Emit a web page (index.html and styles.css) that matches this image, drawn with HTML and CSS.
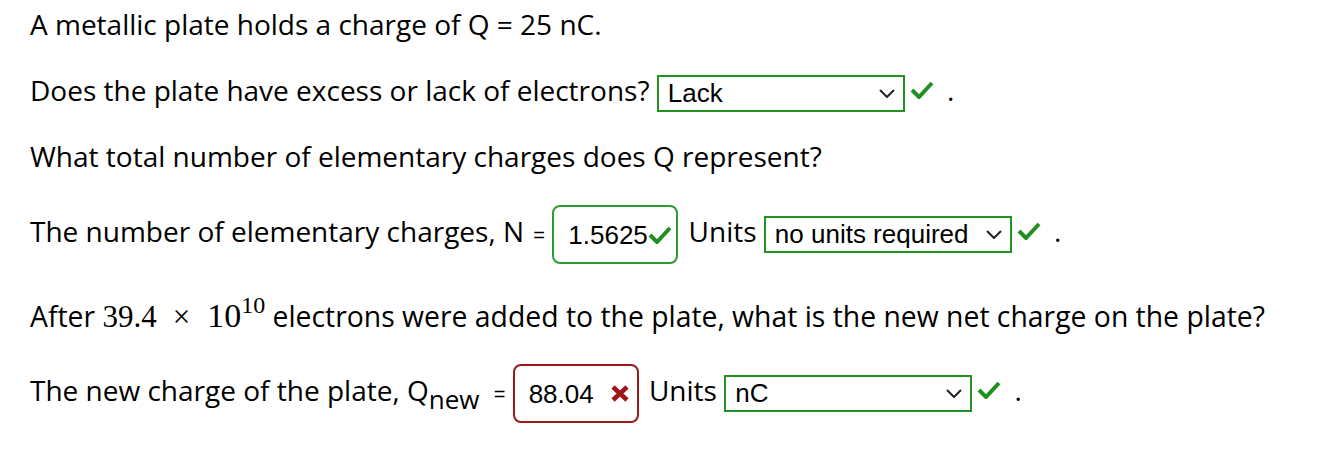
FILE: index.html
```html
<!DOCTYPE html>
<html lang="en">
<head>
    <meta charset="UTF-8">
    <title>Charge on a metallic plate</title>
    <link rel="stylesheet" href="styles.css">
</head>
<body>
    <div class="problem">
        <p class="row r1">A metallic plate holds a charge of Q = 25 nC.</p>

        <p class="row r2">Does the plate have excess or lack of electrons?
            <span class="select ok">
                <span class="select-text">Lack</span>
                <svg class="chevron" viewBox="0 0 16 9"><path d="M1 1 L8 8 L15 1" /></svg>
            </span><svg class="mark check outside" viewBox="0 0 24 18"><path d="M2 9 L9 16 L22 2" /></svg>
            <span class="dot">.</span>
        </p>

        <p class="row r3">What total number of elementary charges does Q represent?</p>

        <p class="row r4">The number of elementary charges, N <span class="eq">=</span>
            <span class="answer ok">
                <span class="answer-text">1.5625</span>
                <svg class="mark check" viewBox="0 0 24 18"><path d="M2 9 L9 16 L22 2" /></svg>
            </span>
            Units
            <span class="select ok">
                <span class="select-text">no units required</span>
                <svg class="chevron" viewBox="0 0 16 9"><path d="M1 1 L8 8 L15 1" /></svg>
            </span><svg class="mark check outside" viewBox="0 0 24 18"><path d="M2 9 L9 16 L22 2" /></svg>
            <span class="dot">.</span>
        </p>

        <p class="row r5">After <span class="math"><span class="mn">39.4</span><span class="mo">×</span><span class="mn base">10</span><sup>10</sup></span> electrons were added to the plate, what is the new net charge on the plate?</p>

        <p class="row r6">The new charge of the plate, Q<sub>new</sub> <span class="eq wide">=</span>
            <span class="answer bad">
                <span class="answer-text">88.04</span>
                <svg class="mark cross" viewBox="0 0 18 17"><path d="M2 2 L16 15 M16 2 L2 15" /></svg>
            </span>
            Units
            <span class="select ok">
                <span class="select-text">nC</span>
                <svg class="chevron" viewBox="0 0 16 9"><path d="M1 1 L8 8 L15 1" /></svg>
            </span><svg class="mark check outside" viewBox="0 0 24 18"><path d="M2 9 L9 16 L22 2" /></svg>
            <span class="dot">.</span>
        </p>
    </div>
</body>
</html>
```

FILE: styles.css
```css
body {
    margin: 0;
    min-height: 450px;
    background: #ffffff;
    color: #000000;
    font-family: "Open Sans", "DejaVu Sans", sans-serif;
    font-size: 28px;
}
.problem {
    padding-left: 30px;
}
.row {
    margin: 0;
    height: 50px;
    line-height: 50px;
    white-space: nowrap;
}
.r1 { height: 48px; line-height: 48px; }
.r2 { margin-top: 17px; }
.r3 { margin-top: 16px; }
.r4 { margin-top: 20px; height: 60px; line-height: 60px; }
.r5 { margin-top: 30px; font-size: 28.35px; }
.r6 { margin-top: 19px; height: 60px; line-height: 60px; }

.eq {
    font-family: "Liberation Sans", Arial, sans-serif;
    font-size: 20px;
    margin-left: 2px;
}
.eq.wide {
    margin-left: 7px;
}
.math {
    font-family: "Liberation Serif", "DejaVu Serif", serif;
    font-size: 31px;
}
.math .base {
    font-size: 34px;
}
.mo {
    margin: 0 17px 0 16px;
}
.math sup {
    font-size: 24px;
    line-height: 0;
    vertical-align: 14px;
}
sub {
    font-size: 26px;
    line-height: 0;
    vertical-align: -8px;
}

.select {
    display: inline-flex;
    align-items: center;
    justify-content: space-between;
    box-sizing: border-box;
    width: 248px;
    height: 37px;
    padding: 0 8px 0 9px;
    border: 2px solid #229322;
    vertical-align: middle;
    font-family: "Liberation Sans", Arial, sans-serif;
    font-size: 26px;
    line-height: 33px;
    background: #ffffff;
}
.chevron {
    width: 16px;
    height: 9px;
    fill: none;
    stroke: #222222;
    stroke-width: 2;
}
.answer {
    display: inline-flex;
    align-items: center;
    justify-content: space-between;
    box-sizing: border-box;
    width: 126px;
    height: 59px;
    margin-right: 3px;
    padding: 0 4px 0 14px;
    border: 2px solid;
    border-radius: 8px;
    vertical-align: middle;
    font-family: "Liberation Sans", Arial, sans-serif;
    font-size: 26px;
    line-height: 30px;
}
.answer.ok { border-color: #2f9a2f; }
.answer.bad { border-color: #9b1b1b; padding-right: 8px; }

.mark {
    fill: none;
    stroke-width: 4;
}
.check {
    width: 24px;
    height: 18px;
    stroke: #1f8f1f;
}
.check.outside {
    margin-left: 5px;
    vertical-align: 2px;
}
.cross {
    width: 18px;
    height: 17px;
    stroke: #a01515;
    stroke-width: 4.5;
}
.dot {
    margin-left: 6px;
}
```
